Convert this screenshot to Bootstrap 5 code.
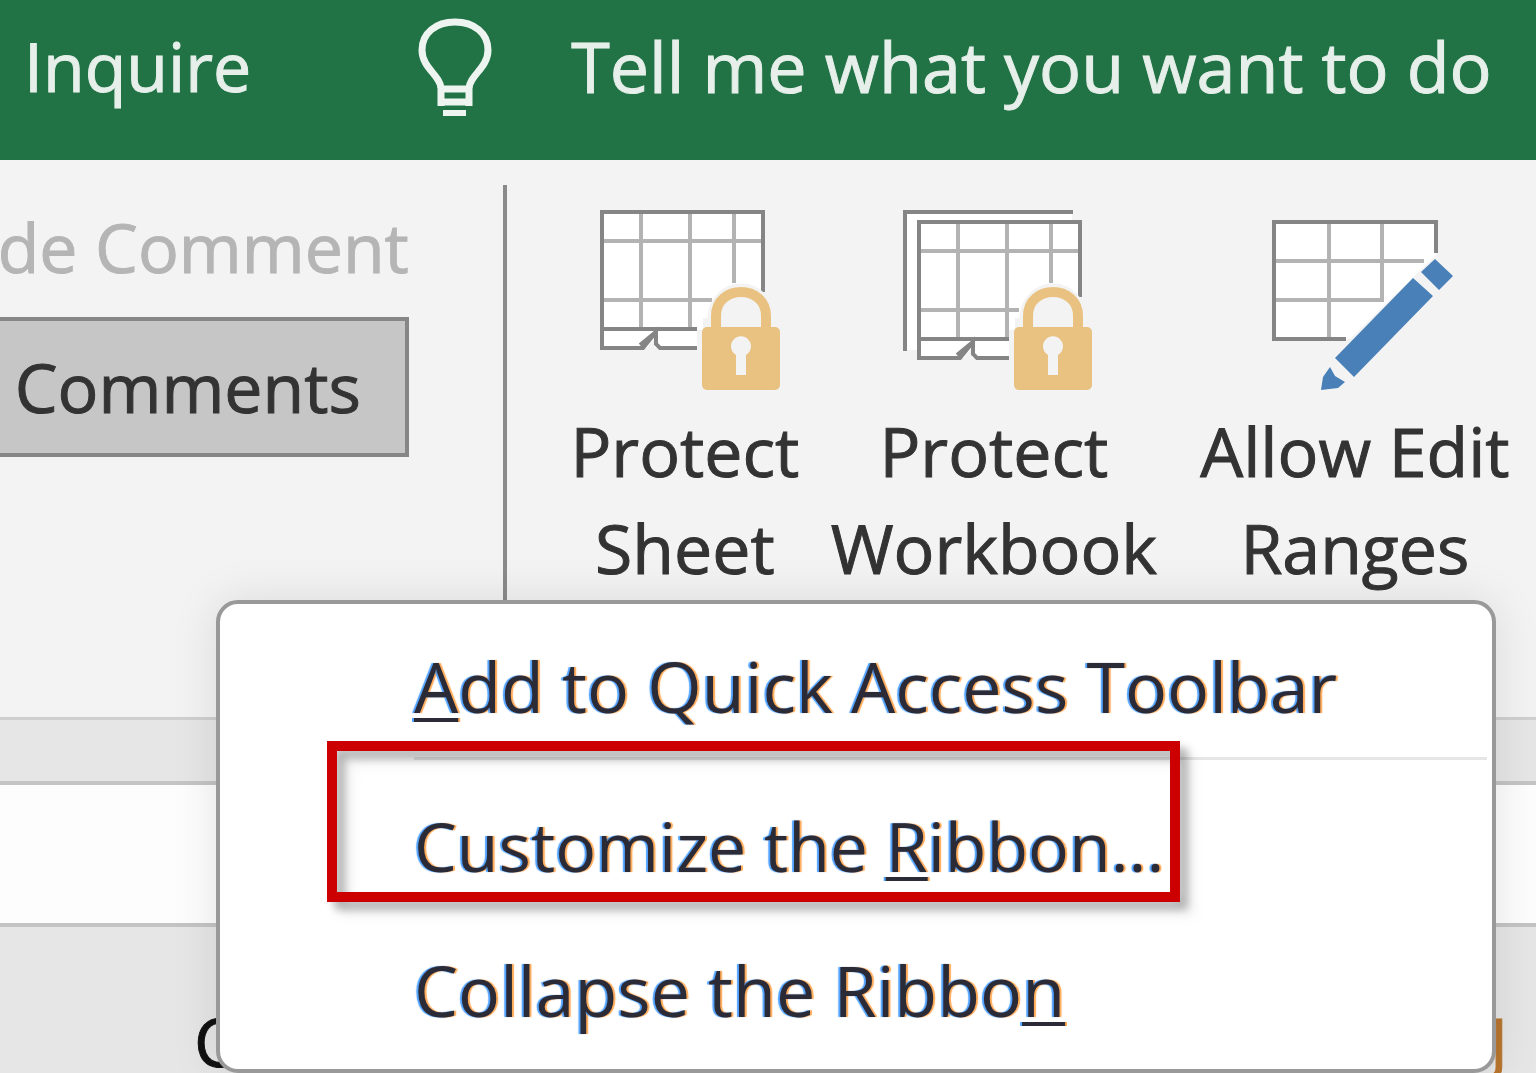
<!DOCTYPE html>
<html lang="en">
<head>
<meta charset="utf-8">
<meta name="viewport" content="width=device-width, initial-scale=1">
<title>Review ribbon</title>
<link rel="stylesheet" href="https://cdn.jsdelivr.net/npm/bootstrap@5.3.0/dist/css/bootstrap.min.css">
<style>
  body { font-family: "Open Sans", "Noto Sans", sans-serif; font-size: 68px; line-height: 96px; color: #333; background: #e6e6e6; -webkit-text-stroke: 1px; }
  .app-shell { min-height: 100vh; }
  .tab-strip { background: #217346; height: 160px; padding: 18px 24px 0; }
  .tab-strip a, .tab-strip button { color: #e6efea; font: inherit; white-space: nowrap; }
  .tab-strip .tell-me { gap: 78px; margin-left: 166px; font-size: 70px; }
  .ribbon { background: #f3f3f3; height: 560px; border-bottom: 3px solid #cfcfcf; padding-top: 25px; }
  .comment-group { width: 33%; border-right: 4px solid #8a8a8a; padding-right: 94px; gap: 22px; padding-top: 14px; }
  .ribbon button { font: inherit; color: inherit; border-radius: 0; padding: 0; }
  .ribbon .hide-comment, .ribbon .hide-comment:disabled { color: #b5b5b5; opacity: 1; border: 0; white-space: nowrap; }
  .ribbon .show-comments { background: #c6c6c6; border: 4px solid #868686; border-left: 0; height: 140px; padding-right: 44px; }
  .protect-group { padding-left: 42px; }
  .protect-group svg { display: block; margin: 15px auto 12px; }
  .w-sheet { width: 272px; }
  .w-book { width: 346px; }
  .w-ranges { width: 376px; }
  .ribbon .protect-group button { flex: none; white-space: nowrap; line-height: 97px; }
  .formula-gap { height: 65px; border-bottom: 4px solid #c4c4c4; }
  .formula-bar { height: 142px; background: #fdfdfd; border: 0; border-bottom: 4px solid #c4c4c4; border-radius: 0; }
  .column-heads { padding: 66px 28px 0 194px; color: #111; height: 146px; overflow: hidden; }
  .column-heads .edge-head { color: #b8752e; }
  .ribbon-menu { left: 216px; top: 600px; right: 40px; height: 473px; border: 4px solid #999; border-radius: 22px; background: #fff; box-shadow: 0 0 48px rgba(0,0,0,.1); padding: 34px 5px 0 194px; -webkit-text-stroke: 0; }
  .ribbon-menu button { font: inherit; font-size: 70px; color: #2b2b38; white-space: nowrap; display: block; border: 0; padding: 0; text-align: left; text-shadow: -2px 0 1px rgba(20,130,255,.75), 2px 0 1px rgba(255,140,30,.75); }
  .ribbon-menu .boxed-item { font-size: 68px; }
  .ribbon-menu u { text-decoration-thickness: 4px; text-underline-offset: 5px; text-decoration-skip-ink: none; }
  .menu-line { height: 3px; background: #e6e6e6; margin: 23px 0 38px; }
  .callout { left: 327px; top: 741px; width: 853px; height: 161px; border: 10px solid #c00; filter: drop-shadow(6px 6px 4px rgba(0,0,0,.16)) drop-shadow(9px 9px 5px rgba(0,0,0,.2)); pointer-events: none; }
</style>
</head>
<body>
<div class="app-shell position-relative d-flex flex-column overflow-hidden">
  <nav class="tab-strip d-flex align-items-start">
    <a href="#" class="text-decoration-none">Inquire</a>
    <button type="button" class="tell-me btn border-0 p-0 d-flex align-items-start">
      <svg width="76" height="100" viewBox="0 0 76 100" fill="none" stroke="#eef5f1" stroke-width="7" aria-hidden="true">
        <path d="M24 70C23 57 5 50 5 32C5 15 19 4 38 4S71 15 71 32C71 50 53 57 52 70"/>
        <path d="M21 71H55M21 84H55M24 68V88M52 68V88" /><path d="M26 95H49" stroke-width="6"/>
      </svg>
      <span>Tell me what you want to do</span>
    </button>
  </nav>
  <section class="ribbon d-flex">
    <div class="comment-group d-flex flex-column flex-shrink-0 overflow-hidden">
      <button type="button" class="hide-comment btn d-flex justify-content-end" disabled>de Comment</button>
      <button type="button" class="show-comments btn d-flex justify-content-end align-items-center">Comments</button>
    </div>
    <div class="protect-group d-flex align-items-start">
      <button type="button" class="w-sheet btn border-0">
        <svg width="190" height="190" viewBox="590 200 190 190" aria-hidden="true">
          <path d="M602 212H763V292L745 330H697V348H602Z" fill="#fff"/>
          <path d="M641 212V328M690 212V328M734 212V283M602 241H763M602 300H712" stroke="#b3b3b3" stroke-width="4" fill="none"/>
          <path d="M645 350L655 338V350Z" fill="#f3f3f3"/>
          <path d="M763 292V212H602V348H643L656 332V344L660 348H697M602 329H697M640 345L657 331" stroke="#858585" stroke-width="4" fill="none"/>
          <path d="M707 322V390H775V322H771C771 276 711 276 711 322Z" fill="#f3f3f3" stroke="#f3f3f3" stroke-width="8"/>
          <path d="M716 330V316C716 284 766 284 766 316V330" stroke="#e9c282" stroke-width="10" fill="none"/>
          <rect x="702" y="327" width="78" height="63" rx="5" fill="#e9c282"/>
          <path d="M736 375V355A10 10 0 1 1 746 355V375Z" fill="#f3f3f3"/>
        </svg>
        Protect<br>Sheet
      </button>
      <button type="button" class="w-book btn border-0">
        <svg width="198" height="190" viewBox="895 200 198 190" aria-hidden="true">
          <path d="M905 212H1072V222H918V350H905Z" fill="#fff"/>
          <path d="M905 351V212H1073" stroke="#858585" stroke-width="4" fill="none"/>
          <path d="M919 222H1080V296L1060 330H1009V358H919Z" fill="#fff"/>
          <path d="M958 222V338M1007 222V338M1051 222V283M919 251H1080M919 310H1019" stroke="#b3b3b3" stroke-width="4" fill="none"/>
          <path d="M962 360L972 348V360Z" fill="#f3f3f3"/>
          <path d="M1080 297V222H919V358H960L973 342V354L977 358H1009M919 339H1009M957 355L974 341" stroke="#858585" stroke-width="4" fill="none"/>
          <path d="M1019 322V390H1087V322H1083C1083 276 1023 276 1023 322Z" fill="#f3f3f3" stroke="#f3f3f3" stroke-width="8"/>
          <path d="M1028 330V316C1028 284 1078 284 1078 316V330" stroke="#e9c282" stroke-width="10" fill="none"/>
          <rect x="1014" y="327" width="78" height="63" rx="5" fill="#e9c282"/>
          <path d="M1048 375V355A10 10 0 1 1 1058 355V375Z" fill="#f3f3f3"/>
        </svg>
        Protect<br>Workbook
      </button>
      <button type="button" class="w-ranges btn border-0">
        <svg width="196" height="190" viewBox="1257 200 196 190" aria-hidden="true">
          <path d="M1274 222H1436V255L1350 339H1274Z" fill="#fff"/>
          <path d="M1329 222V338M1382 222V300M1274 261H1424M1274 300H1384" stroke="#b3b3b3" stroke-width="4" fill="none"/>
          <path d="M1436 253V222H1274V339H1346" stroke="#858585" stroke-width="4" fill="none"/>
          <path d="M1413 278L1433 296L1354 377L1335 358ZM1435 259L1453 276L1439 290L1421 272ZM1330 367L1335 376L1345 382L1338 388L1321 390L1323 377Z" fill="#4a80b8"/>
        </svg>
        Allow Edit<br>Ranges
      </button>
    </div>
  </section>
  <div class="formula-gap flex-shrink-0"></div>
  <input class="formula-bar w-100 flex-shrink-0" type="text" aria-label="Formula bar">
  <div class="column-heads d-flex justify-content-between"><span>C</span><span class="edge-head">J</span></div>

  <div class="ribbon-menu position-absolute">
    <button type="button" class="bg-transparent"><u>A</u>dd to Quick Access Toolbar</button>
    <div class="menu-line"></div>
    <button type="button" class="boxed-item bg-transparent">Customize the <u>R</u>ibbon...</button>
    <button type="button" class="bg-transparent mt-5">Collapse the Ribbo<u>n</u></button>
  </div>
  <div class="callout position-absolute"></div>
</div>
<script src="https://cdn.jsdelivr.net/npm/bootstrap@5.3.0/dist/js/bootstrap.bundle.min.js"></script>
</body>
</html>
